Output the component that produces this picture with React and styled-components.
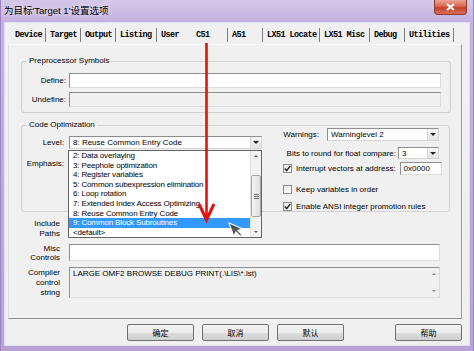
import React from 'react'
import styled, { createGlobalStyle } from 'styled-components'

const GlobalStyle = createGlobalStyle`
  html, body { margin: 0; padding: 0; background: #fff; }
  body { font-family: "Liberation Sans", "Noto Sans CJK SC", sans-serif; color: #000; }
  * { box-sizing: border-box; }
`

const Window = styled.div`
  position: relative;
  width: 474px;
  height: 351px;
  display: flex;
  flex-direction: column;
  overflow: hidden;
  background: linear-gradient(180deg, #d6c8ea 0px, #c4b2df 22px, #b7a3d7 100%);
  box-shadow: inset 1px 0 0 #9c84c4, inset -1px 0 0 #9c84c4;
`
const TitleBar = styled.div`
  height: 22px;
  flex: none;
  display: flex;
  justify-content: space-between;
  padding: 0 7px 0 4px;
`
const Title = styled.div`
  font-size: 9.5px;
  line-height: 22px;
  text-shadow: 0 0 5px rgba(255, 255, 255, 0.9);
`
const CloseButton = styled.div`
  width: 33px;
  height: 15px;
  display: flex;
  align-items: center;
  justify-content: center;
  border: 1px solid #8a3a30;
  border-top: none;
  border-radius: 0 0 4px 4px;
  background: linear-gradient(180deg, #eaa597 0%, #d9664f 45%, #c5402a 55%, #d9705a 100%);
`
const Client = styled.div`
  flex: 1;
  margin: 0 4px 5px;
  display: flex;
  flex-direction: column;
  background: #f0f0f0;
  border: 1px solid #e4ddef;
`
const TabStrip = styled.div`
  height: 21px;
  flex: none;
  display: flex;
  align-items: flex-end;
  padding-left: 6px;
`
const Tab = styled.div`
  width: ${p => p.$w}px;
  height: 14px;
  margin-bottom: 2px;
  padding-left: ${p => p.$pad}px;
  border-right: 1px solid ${p => (p.$sep ? '#7c7c7c' : 'transparent')};
  font-family: "Liberation Mono", monospace;
  font-weight: bold;
  font-size: 8.5px;
  letter-spacing: -0.6px;
  line-height: 14px;
  white-space: nowrap;
`
const Panel = styled.div`
  width: 454px;
  height: 275px;
  margin-left: 3px;
  padding: 11px 0 0 12px;
  border: 1px solid;
  border-color: #fbfbfb #9c9c9c #8f8f8f #dedede;
`
const GroupBox = styled.fieldset`
  margin: ${p => p.$mt || 0}px 0 0;
  min-width: 0;
  width: ${p => p.$w}px;
  padding: ${p => p.$pad};
  border: 1px solid #d2d2d2;
  border-radius: 3px;
`
const Legend = styled.legend`
  margin-left: 5px;
  padding: 0 2px;
  font-size: 8px;
  line-height: 10px;
`
const FieldGrid = styled.div`
  display: grid;
  grid-template-columns: 44px 1fr;
  column-gap: 3px;
  row-gap: 4px;
  grid-auto-rows: 15px;
`
const Label = styled.div`
  font-size: 8px;
  line-height: ${p => p.$lh || 10}px;
  text-align: right;
  align-self: ${p => p.$top ? 'start' : 'center'};
  padding-top: ${p => p.$top ? 1 : 0}px;
  white-space: nowrap;
`
const TextInput = styled.div`
  height: 100%;
  display: flex;
  align-items: center;
  padding-left: 3px;
  font-size: 8px;
  background: ${p => (p.$disabled ? '#f0f0f0' : '#fff')};
  border: 1px solid;
  border-color: #8e8e8e #dcdcdc #dcdcdc #8e8e8e;
  white-space: nowrap;
  overflow: hidden;
`
const OptLayout = styled.div`
  display: flex;
  gap: 21px;
`
const LeftCol = styled.div`
  width: 240px;
  padding-top: 6px;
  display: grid;
  grid-template-columns: 42px 193px;
  grid-auto-rows: 13px;
  column-gap: 5px;
  row-gap: 8px;
  align-content: start;
`
const RightCol = styled.div`
  width: 157px;
  margin-top: -2px;
  display: flex;
  flex-direction: column;
`
const Combo = styled.div`
  position: relative;
  width: ${p => (p.$w ? `${p.$w}px` : 'auto')};
  height: ${p => p.$h || 13}px;
  display: flex;
  background: #fff;
  border: 1px solid;
  border-color: #8e8e8e #d6d6d6 #d6d6d6 #8e8e8e;
  font-size: 8px;
`
const ComboText = styled.div`
  flex: 1;
  display: flex;
  align-items: center;
  padding-left: 3px;
  white-space: nowrap;
  overflow: hidden;
`
const DropButton = styled.div`
  width: 11px;
  display: flex;
  align-items: center;
  justify-content: center;
  background: linear-gradient(180deg, #f7f7f7, #e4e4e4);
  border-left: 1px solid #d9d9d9;
`
const Caret = styled.span`
  width: 0;
  height: 0;
  border-left: ${p => p.$s || 3}px solid transparent;
  border-right: ${p => p.$s || 3}px solid transparent;
  ${p => (p.$up ? 'border-bottom' : 'border-top')}: ${p => p.$s || 3}px solid ${p => p.$c || '#222'};
`
const Row = styled.div`
  height: ${p => p.$h}px;
  margin-top: ${p => p.$mt || 0}px;
  display: flex;
  align-items: center;
  justify-content: ${p => (p.$end ? 'flex-end' : 'flex-start')};
  gap: ${p => p.$gap || 4}px;
  padding-right: ${p => (p.$end ? 1 : 0)}px;
  font-size: 8px;
  white-space: nowrap;
`
const Grow = styled.span`
  flex: 1;
`
const Box = styled.span`
  width: 9px;
  height: 9px;
  flex: none;
  display: flex;
  align-items: center;
  justify-content: center;
  background: linear-gradient(135deg, #e6e6e6, #ffffff);
  border: 1px solid #8b8b8b;
`
const SmallInput = styled(TextInput)`
  width: 42px;
  flex: none;
`
const DropList = styled.div`
  position: absolute;
  left: -2px;
  top: calc(100% + 2px);
  width: 194px;
  height: 88px;
  display: flex;
  background: #fff;
  border: 1px solid #646464;
  z-index: 2;
`
const ListItems = styled.div`
  flex: 1;
`
const ListItem = styled.div`
  height: 9.6px;
  line-height: 9.6px;
  padding-left: 4px;
  font-size: 8px;
  letter-spacing: -0.15px;
  white-space: nowrap;
  background: ${p => (p.$sel ? '#3399ff' : 'transparent')};
  color: ${p => (p.$sel ? '#fff' : '#000')};
`
const ScrollBar = styled.div`
  width: 11px;
  display: flex;
  flex-direction: column;
  background: #f2f2f2;
  border-left: 1px solid #e2e2e2;
`
const ScrollBtn = styled.div`
  height: 10px;
  display: flex;
  align-items: center;
  justify-content: center;
`
const Track = styled.div`
  flex: 1;
`
const Thumb = styled.div`
  margin: 14px 0 0 0;
  height: 42px;
  display: flex;
  align-items: center;
  justify-content: center;
  border: 1px solid #a4a4a4;
  border-radius: 2px;
  background: linear-gradient(90deg, #f4f4f4, #dedede);
`
const Grip = styled.span`
  width: 5px;
  height: 5px;
  background: repeating-linear-gradient(180deg, #6d6d6d 0 1px, transparent 1px 2px);
`
const LowerGrid = styled.div`
  margin: 8px 21px 0 0;
  display: grid;
  grid-template-columns: 39px 1fr;
  grid-template-rows: 18px 17px 31px;
  column-gap: 9px;
  row-gap: 6px;
`
const FieldWithButton = styled.div`
  display: flex;
  align-items: center;
  gap: 2px;
  margin-right: -2px;
`
const BrowseButton = styled.div`
  width: 13px;
  height: 15px;
  flex: none;
  display: flex;
  align-items: flex-end;
  justify-content: center;
  padding-bottom: 3px;
  font-size: 8px;
  line-height: 8px;
  border: 1px solid #7a7a7a;
  border-radius: 2px;
  background: linear-gradient(180deg, #f6f6f6, #dcdcdc);
`
const StringBox = styled.div`
  display: flex;
  background: #f0f0f0;
  border: 1px solid;
  border-color: #8e8e8e #dcdcdc #dcdcdc #8e8e8e;
  font-size: 8px;
`
const StringText = styled.div`
  flex: 1;
  padding: 1px 0 0 3px;
  line-height: 10px;
  white-space: nowrap;
`
const StringScroll = styled.div`
  width: 11px;
  display: flex;
  flex-direction: column;
  justify-content: space-between;
  align-items: center;
  padding: 5px 0 5px;
`
const ButtonRow = styled.div`
  height: 17px;
  margin-top: 5px;
  display: flex;
  gap: 8px;
  padding: 0 7px 0 122px;
`
const Button = styled.div`
  width: 67px;
  height: 17px;
  margin-left: ${p => (p.$push ? 'auto' : '0')};
  display: flex;
  align-items: center;
  justify-content: center;
  font-size: 8px;
  border: 1px solid #707070;
  border-radius: 2px;
  background: linear-gradient(180deg, #f3f3f3 0%, #ebebeb 50%, #dddddd 51%, #cfcfcf 100%);
`
const Overlay = styled.svg`
  position: absolute;
  left: ${p => p.$x}px;
  top: ${p => p.$y}px;
  pointer-events: none;
  z-index: 5;
`

const tabs = [
  { label: 'Device', w: 35 },
  { label: 'Target', w: 35 },
  { label: 'Output', w: 35 },
  { label: 'Listing', w: 41 },
  { label: 'User', w: 27, noSep: true },
  { label: 'C51', w: 44, pad: 12 },
  { label: 'A51', w: 35 },
  { label: 'LX51 Locate', w: 57 },
  { label: 'LX51 Misc', w: 50 },
  { label: 'Debug', w: 35 },
  { label: 'Utilities', w: 49 },
]

const levels = [
  '2: Data overlaying',
  '3: Peephole optimization',
  '4: Register variables',
  '5: Common subexpression elimination',
  '6: Loop rotation',
  '7: Extended Index Access Optimizing',
  '8: Reuse Common Entry Code',
  '9: Common Block Subroutines',
  '<default>',
]

const Check = ({ on }) => (
  <Box>
    {on && (
      <svg width="7" height="7" viewBox="0 0 7 7">
        <path d="M0.8 3.6 L2.7 5.6 L6.3 0.9" fill="none" stroke="#1e1e1e" strokeWidth="1.4" />
      </svg>
    )}
  </Box>
)

const Select = ({ value, w, h, children }) => (
  <Combo $w={w} $h={h}>
    <ComboText>{value}</ComboText>
    <DropButton><Caret /></DropButton>
    {children}
  </Combo>
)

const App = () => {
  return (
    <>
      <GlobalStyle />
      <Window>
        <TitleBar>
          <Title>为目标'Target 1'设置选项</Title>
          <CloseButton>
            <svg width="9" height="8" viewBox="0 0 9 8">
              <path d="M1 1 L8 7 M8 1 L1 7" stroke="#fff" strokeWidth="2" />
            </svg>
          </CloseButton>
        </TitleBar>
        <Client>
          <TabStrip>
            {tabs.map(t => (
              <Tab key={t.label} $w={t.w} $pad={t.pad || 4} $sep={!t.noSep}>
                {t.label}
              </Tab>
            ))}
          </TabStrip>
          <Panel>
            <GroupBox $w={430} $pad="7px 9px 5px 0">
              <Legend>Preprocessor Symbols</Legend>
              <FieldGrid>
                <Label>Define:</Label>
                <TextInput />
                <Label>Undefine:</Label>
                <TextInput $disabled />
              </FieldGrid>
            </GroupBox>
            <GroupBox $w={429} $mt={7} $pad="0 9px 0 0">
              <Legend>Code Optimization</Legend>
              <OptLayout>
                <LeftCol>
                  <Label>Level:</Label>
                  <Select value="8: Reuse Common Entry Code">
                    <DropList>
                      <ListItems>
                        {levels.map((l, i) => (
                          <ListItem key={l} $sel={i === 7}>{l}</ListItem>
                        ))}
                      </ListItems>
                      <ScrollBar>
                        <ScrollBtn><Caret $up $s={2.5} $c="#555" /></ScrollBtn>
                        <Track>
                          <Thumb><Grip /></Thumb>
                        </Track>
                        <ScrollBtn><Caret $s={2.5} $c="#555" /></ScrollBtn>
                      </ScrollBar>
                    </DropList>
                  </Select>
                  <Label>Emphasis:</Label>
                  <Select value="" />
                </LeftCol>
                <RightCol>
                  <Row $h={13} $end $gap={8}>
                    Warnings:
                    <Select value="Warninglevel 2" w={112} />
                  </Row>
                  <Row $h={12} $mt={6} $end $gap={2}>
                    Bits to round for float compare:
                    <Select value="3" w={41} h={12} />
                  </Row>
                  <Row $h={13} $mt={3}>
                    <Check on />
                    <Grow>Interrupt vectors at address:</Grow>
                    <SmallInput>0x0000</SmallInput>
                  </Row>
                  <Row $h={10} $mt={9}>
                    <Check />
                    Keep variables in order
                  </Row>
                  <Row $h={10} $mt={7}>
                    <Check on />
                    Enable ANSI integer promotion rules
                  </Row>
                </RightCol>
              </OptLayout>
            </GroupBox>
            <LowerGrid>
              <Label>Include<br />Paths</Label>
              <FieldWithButton>
                <TextInput />
                <BrowseButton>...</BrowseButton>
              </FieldWithButton>
              <Label $lh={9}>Misc<br />Controls</Label>
              <TextInput />
              <Label $top>Compiler<br />control<br />string</Label>
              <StringBox>
                <StringText>{'LARGE OMF2 BROWSE DEBUG PRINT(.\\LIS\\*.lst)'}</StringText>
                <StringScroll>
                  <Caret $up $s={2} $c="#8a8a8a" />
                  <Caret $s={2} $c="#8a8a8a" />
                </StringScroll>
              </StringBox>
            </LowerGrid>
          </Panel>
          <ButtonRow>
            <Button>确定</Button>
            <Button>取消</Button>
            <Button>默认</Button>
            <Button $push>帮助</Button>
          </ButtonRow>
        </Client>

        <Overlay $x={197} $y={42} width="20" height="182" viewBox="0 0 20 182">
          <path d="M9.5 1 L9.5 176" stroke="#e3120f" strokeWidth="2.6" fill="none" />
          <path d="M2.5 163 L9.5 178 L16.5 163" stroke="#e3120f" strokeWidth="3" fill="none" strokeLinecap="round" />
        </Overlay>
        <Overlay $x={227} $y={221} width="16" height="22" viewBox="0 0 16 22">
          <path
            d="M2 2 L2 16 L5.5 12.8 L8 18.5 L10.2 17.6 L7.8 12 L12.5 12 Z"
            fill="#3c3c3c"
            fillOpacity="0.85"
            stroke="#fff"
            strokeWidth="1"
            transform="rotate(-20 2 2)"
          />
        </Overlay>
      </Window>
    </>
  )
}

export default App
